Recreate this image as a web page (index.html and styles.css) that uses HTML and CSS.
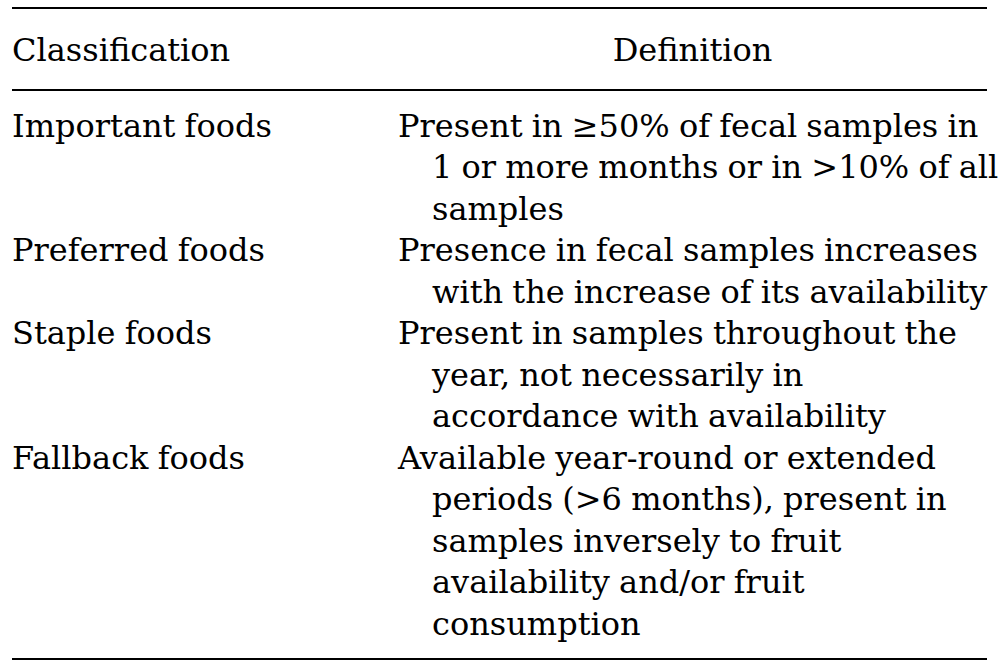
FILE: index.html
```html
<!DOCTYPE html>
<html lang="en">
<head>
<meta charset="utf-8">
<title>Food classification</title>
<link rel="stylesheet" href="styles.css">
</head>
<body>
<table class="tbl">
  <thead>
    <tr>
      <th class="c1">Classification</th>
      <th class="c2">Definition</th>
    </tr>
  </thead>
  <tbody>
    <tr>
      <td class="c1">Important foods</td>
      <td class="c2 def">Present in &ge;50% of fecal samples in<br>1 or more months or in &gt;10% of all<br>samples</td>
    </tr>
    <tr>
      <td class="c1">Preferred foods</td>
      <td class="c2 def">Presence in fecal samples increases<br>with the increase of its availability</td>
    </tr>
    <tr>
      <td class="c1">Staple foods</td>
      <td class="c2 def">Present in samples throughout the<br>year, not necessarily in<br>accordance with availability</td>
    </tr>
    <tr>
      <td class="c1">Fallback foods</td>
      <td class="c2 def">Available year-round or extended<br>periods (&gt;6 months), present in<br>samples inversely to fruit<br>availability and/or fruit<br>consumption</td>
    </tr>
  </tbody>
</table>
</body>
</html>
```
FILE: styles.css
```css
html, body {
  margin: 0;
  padding: 0;
  background: #ffffff;
}
body {
  padding: 7px 16px 0 12px;
  font-family: "DejaVu Serif", "Liberation Serif", serif;
  font-size: 32px;
  line-height: 41.5px;
  word-spacing: -1px;
  color: #000;
}
.tbl {
  width: 975px;
  table-layout: fixed;
  border-collapse: collapse;
  border-top: 2px solid #000;
  border-bottom: 2px solid #000;
}
.tbl th {
  font-weight: normal;
  padding: 21px 0 17px;
  border-bottom: 2px solid #000;
  vertical-align: top;
  white-space: nowrap;
}
.tbl th.c1 { text-align: left; }
.tbl th.c2 { text-align: center; }
.tbl td {
  padding: 0;
  vertical-align: top;
  text-align: left;
  white-space: nowrap;
}
.tbl tbody tr:first-child td { padding-top: 15px; }
.tbl tbody tr:last-child td { padding-bottom: 13px; }
.c1 { width: 386px; }
.tbl td.def {
  padding-left: 34px;
  text-indent: -34px;
}
```
